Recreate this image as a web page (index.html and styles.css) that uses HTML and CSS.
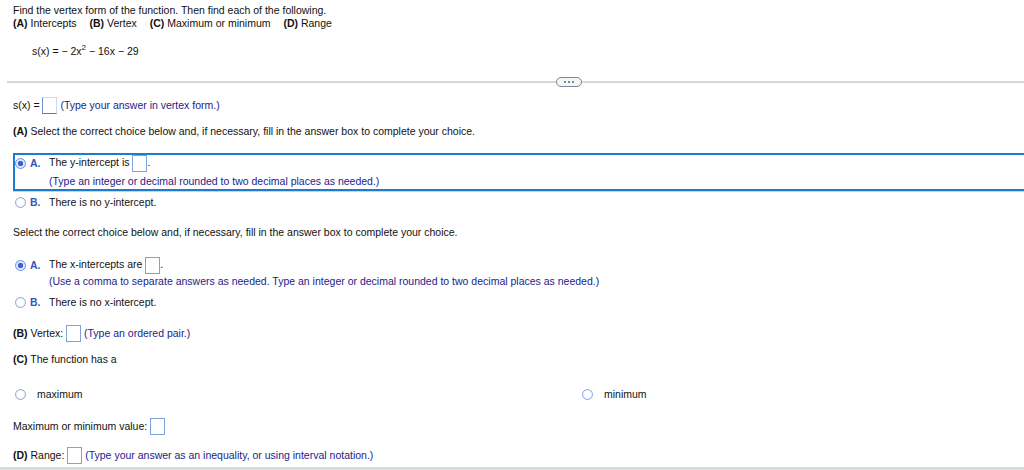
FILE: index.html
```html
<!DOCTYPE html>
<html lang="en">
<head>
  <meta charset="UTF-8">
  <title>Vertex form</title>
  <link rel="stylesheet" href="styles.css">
</head>
<body>

<div class="page">
  <div class="intro">
    <div class="line">Find the vertex form of the function. Then find each of the following.</div>
    <div class="line parts">
      <span><b>(A)</b> Intercepts</span>
      <span><b>(B)</b> Vertex</span>
      <span><b>(C)</b> Maximum or minimum</span>
      <span><b>(D)</b> Range</span>
    </div>
    <div class="line formula">s(x) = &minus; 2x<sup>2</sup> &minus; 16x &minus; 29</div>
  </div>

  <div class="divider">
    <span class="more"><i></i><i></i><i></i></span>
  </div>

  <div class="row gap-vertex">s(x) = <span class="box under"></span> <span class="hint">(Type your answer in vertex form.)</span></div>

  <div class="line gap-a"><b>(A)</b> Select the correct choice below and, if necessary, fill in the answer box to complete your choice.</div>

  <!-- y-intercept choices -->
  <div class="choice-box gap-box">
    <div class="choice tall">
      <span class="radio on"></span>
      <span class="letter">A.</span>
      <span>The y-intercept is <span class="box"></span>.</span>
    </div>
    <div class="hint sub gap-hint1">(Type an integer or decimal rounded to two decimal places as needed.)</div>
  </div>
  <div class="choice gap-b1">
    <span class="radio"></span>
    <span class="letter">B.</span>
    <span>There is no y-intercept.</span>
  </div>

  <div class="line gap-select">Select the correct choice below and, if necessary, fill in the answer box to complete your choice.</div>

  <!-- x-intercept choices -->
  <div class="choice tall gap-a2">
    <span class="radio on"></span>
    <span class="letter">A.</span>
    <span>The x-intercepts are <span class="box"></span>.</span>
  </div>
  <div class="hint sub gap-hint2">(Use a comma to separate answers as needed. Type an integer or decimal rounded to two decimal places as needed.)</div>
  <div class="choice gap-b2">
    <span class="radio"></span>
    <span class="letter">B.</span>
    <span>There is no x-intercept.</span>
  </div>

  <div class="row gap-bv"><b>(B)</b> Vertex: <span class="box"></span> <span class="hint">(Type an ordered pair.)</span></div>

  <div class="line gap-c"><b>(C)</b> The function has a</div>

  <div class="minmax gap-mm">
    <label class="opt"><span class="radio"></span>maximum</label>
    <label class="opt"><span class="radio"></span>minimum</label>
  </div>

  <div class="row gap-val">Maximum or minimum value: <span class="box"></span></div>

  <div class="row gap-range"><b>(D)</b> Range: <span class="box"></span> <span class="hint">(Type your answer as an inequality, or using interval notation.)</span></div>
</div>

<div class="footer-bar"></div>

</body>
</html>
```

FILE: styles.css
```css
html, body {
  margin: 0;
  padding: 0;
  height: 470px;
  overflow: hidden;
  background: #fff;
}

body {
  font-family: "Liberation Sans", Arial, Helvetica, sans-serif;
  font-size: 10.5px;
  color: #111;
  display: flex;
  flex-direction: column;
}

.page {
  padding: 4px 0 0 13px;
  flex: 1;
}

b {
  font-weight: 700;
}

.line {
  height: 13px;
  line-height: 13px;
  white-space: nowrap;
}

.parts span {
  margin-right: 10px;
}

.formula {
  margin-top: 15px;
  padding-left: 19px;
}

.formula sup {
  font-size: 8px;
  line-height: 0;
  position: relative;
  top: -1px;
}

/* divider with the "..." pill */
.divider {
  margin: 19px 0 0 -6px;
  height: 10px;
  position: relative;
}

.divider::before {
  content: "";
  position: absolute;
  left: 0;
  right: 0;
  top: 4px;
  height: 2px;
  background: #d4d7dc;
}

.more {
  position: absolute;
  left: 549px;
  top: 0;
  width: 24px;
  height: 8px;
  border: 1px solid #7b8794;
  border-radius: 5px;
  background: #f3f5f7;
  display: flex;
  align-items: center;
  justify-content: center;
  gap: 2px;
}

.more i {
  width: 2px;
  height: 2px;
  background: #55606c;
  border-radius: 1px;
}

.row {
  height: 17px;
  line-height: 17px;
  white-space: nowrap;
}

.box {
  display: inline-block;
  width: 13px;
  height: 15px;
  border: 1px solid #7ea2de;
  vertical-align: middle;
  margin-top: -2px;
}

.box.under {
  border-color: #c9d7ef;
  border-bottom: 1px solid #4d7ccc;
  border-left-color: #6f94d6;
}

.hint {
  color: #1c1c8a;
}

.choice {
  height: 13px;
  line-height: 13px;
  display: flex;
  align-items: center;
  padding-left: 2px;
  white-space: nowrap;
}

.choice.tall {
  height: 17px;
}

.choice .box {
  margin-top: 0;
}

.radio {
  width: 9px;
  height: 9px;
  border: 1px solid #8aa5e8;
  border-radius: 50%;
  background: #fff;
  flex: none;
  box-shadow: inset 0 0 0 1px #eef2fc;
}

.radio.on {
  border-color: #6c8fe0;
  background: radial-gradient(circle, #3d63d0 0 2.5px, #dfe6f8 3px 100%);
  box-shadow: none;
}

.letter {
  color: #3555b8;
  font-weight: 700;
  width: 19px;
  margin-left: 4px;
}

.sub {
  height: 13px;
  line-height: 13px;
  padding-left: 36px;
  white-space: nowrap;
}

.choice-box {
  border: 2px solid #1f7ad2;
  border-right: none;
  box-shadow: 0 1px 0 #b8d8f4;
  padding-bottom: 1px;
}

.choice-box .choice {
  padding-left: 0;
}

.choice-box .sub {
  padding-left: 34px;
}

.minmax {
  display: grid;
  grid-template-columns: 567px 1fr;
  height: 13px;
  line-height: 13px;
  padding-left: 2px;
}

.opt {
  display: flex;
  align-items: center;
}

.opt .radio {
  margin-right: 11px;
}

.footer-bar {
  height: 3px;
  background: #d9dde2;
  flex: none;
}

/* vertical spacing, matched to the original question layout */
.gap-vertex { margin-top: 10px; }
.gap-a { margin-top: 11px; }
.gap-box { margin-top: 15px; }
.gap-hint1 { margin-top: 3px; }
.gap-b1 { margin-top: 5px; }
.gap-select { margin-top: 17px; }
.gap-a2 { margin-top: 18px; }
.gap-hint2 { margin-top: 1px; }
.gap-b2 { margin-top: 8px; }
.gap-bv { margin-top: 16px; }
.gap-c { margin-top: 11px; }
.gap-mm { margin-top: 22px; }
.gap-val { margin-top: 17px; }
.gap-range { margin-top: 12px; }
```
